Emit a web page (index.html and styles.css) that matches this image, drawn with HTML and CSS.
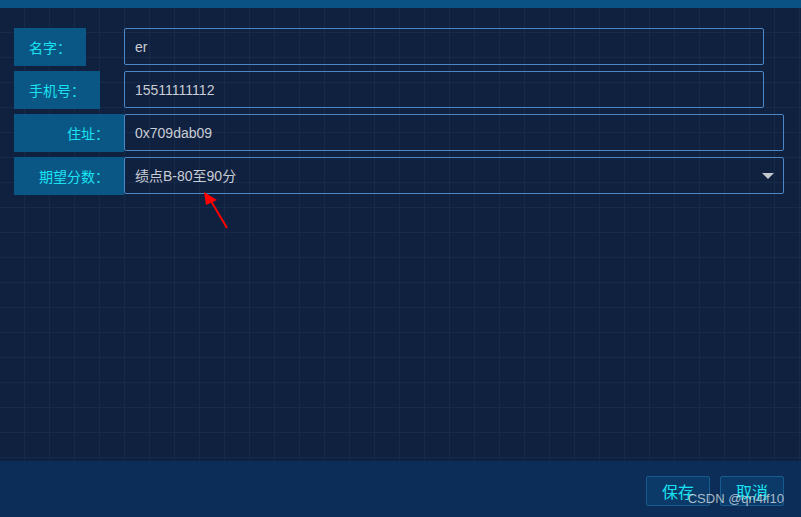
FILE: index.html
```html
<!DOCTYPE html>
<html lang="zh">
<head>
<meta charset="utf-8">
<link rel="stylesheet" href="styles.css">
</head>
<body>
<div class="page">
  <div class="topbar"></div>
  <main class="main">
    <form class="form">
      <div class="row">
        <div class="label fit">名字：</div>
        <div class="field short">er</div>
      </div>
      <div class="row">
        <div class="label fit">手机号：</div>
        <div class="field short">15511111112</div>
      </div>
      <div class="row">
        <div class="label full">住址：</div>
        <div class="field long">0x709dab09</div>
      </div>
      <div class="row">
        <div class="label full">期望分数：</div>
        <div class="field long select">绩点B-80至90分<span class="caret"></span></div>
      </div>
    </form>
    <svg class="arrow" width="40" height="45" viewBox="0 0 40 45">
      <line x1="32" y1="42" x2="16" y2="15" stroke="#ff0000" stroke-width="2"/>
      <polygon points="9,6 22,14 11,19" fill="#ff0000"/>
    </svg>
  </main>
  <footer class="footer">
    <button class="btn" type="button">保存</button>
    <button class="btn" type="button">取消</button>
    <span class="watermark">CSDN @qn4if10</span>
  </footer>
</div>
</body>
</html>
```

FILE: styles.css
```css
html, body {
  margin: 0;
  padding: 0;
}
body {
  width: 801px;
  height: 517px;
  overflow: hidden;
  background-color: #10203f;
  font-family: "Liberation Sans", "Noto Sans CJK SC", sans-serif;
}
.page {
  position: relative;
  height: 517px;
  display: flex;
  flex-direction: column;
  background-color: #10203f;
  background-image:
    linear-gradient(to right, #162b4b 1px, transparent 1px),
    linear-gradient(to bottom, #162b4b 1px, transparent 1px);
  background-size: 25px 25px;
  background-position: 24px 7px;
}
.topbar {
  height: 8px;
  background: #0a5283;
  flex: none;
}
.main {
  position: relative;
  flex: 1;
  padding: 20px 0 0 14px;
}
.form {
  display: flex;
  flex-direction: column;
  gap: 5px;
}
.row {
  display: grid;
  grid-template-columns: 110px auto;
  height: 38px;
}
.label {
  background: #0a5786;
  color: #19e3f2;
  font-size: 14px;
  line-height: 38px;
  height: 38px;
  font-family: "Noto Sans CJK SC", sans-serif;
  white-space: nowrap;
}
.label.fit {
  justify-self: start;
  padding: 0 15px;
}
.label.full {
  text-align: right;
  padding-right: 15px;
}
.field {
  position: relative;
  box-sizing: border-box;
  border: 1px solid #4b86c6;
  border-radius: 2px;
  color: #c9cdd4;
  font-size: 14px;
  line-height: 36px;
  padding-left: 10px;
  font-family: "Liberation Sans", "Noto Sans CJK SC", sans-serif;
}
.field.short { width: 640px; height: 37px; }
.field.long { width: 660px; height: 37px; }
.caret {
  position: absolute;
  right: 9px;
  top: 15px;
  width: 0;
  height: 0;
  border-left: 6px solid transparent;
  border-right: 6px solid transparent;
  border-top: 6px solid #c3c7ce;
}
.arrow {
  position: absolute;
  left: 195px;
  top: 178px;
}
.footer {
  position: relative;
  flex: none;
  height: 56px;
  background: #0c2d57;
  display: flex;
  justify-content: flex-end;
  align-items: flex-start;
  gap: 10px;
  padding: 15px 17px 0 0;
  box-sizing: border-box;
}
.btn {
  width: 64px;
  height: 30px;
  box-sizing: border-box;
  background: #0b3a68;
  border: 1px solid #1a5b8e;
  border-radius: 2px;
  color: #19e3f2;
  font-size: 16px;
  font-family: "Noto Sans CJK SC", sans-serif;
  line-height: 28px;
  padding: 0;
}
.watermark {
  position: absolute;
  right: 17px;
  top: 30px;
  color: rgba(220, 224, 230, 0.78);
  font-size: 13px;
  font-family: "Liberation Sans", sans-serif;
  white-space: nowrap;
}
```
